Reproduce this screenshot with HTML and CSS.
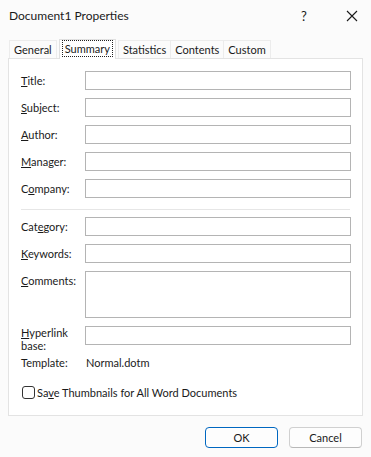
FILE: index.html
```html
<!DOCTYPE html>
<html lang="en">
<head>
  <meta charset="UTF-8" />
  <title>Document1 Properties</title>
  <link rel="stylesheet" href="styles.css">
</head>
<body>
  <div class="dialog">
    <div class="titlebar">
      <span class="title">Document1 Properties</span>
      <span class="help">?</span>
      <svg class="close" width="12" height="12" viewBox="0 0 12 12">
        <path d="M1 1 L11 11 M11 1 L1 11" stroke="#1a1a1a" stroke-width="1.1" fill="none"/>
      </svg>
    </div>

    <div class="tabs">
      <div class="tab">General</div>
      <div class="tab active"><span class="focus">Summary</span></div>
      <div class="tab">Statistics</div>
      <div class="tab">Contents</div>
      <div class="tab">Custom</div>
    </div>

    <div class="panel">
      <div class="fields">
        <label><u>T</u>itle:</label><div class="input"></div>
        <label><u>S</u>ubject:</label><div class="input"></div>
        <label><u>A</u>uthor:</label><div class="input"></div>
        <label><u>M</u>anager:</label><div class="input"></div>
        <label>C<u>o</u>mpany:</label><div class="input"></div>
      </div>

      <div class="separator"></div>

      <div class="fields">
        <label>Cat<u>e</u>gory:</label><div class="input"></div>
        <label><u>K</u>eywords:</label><div class="input"></div>
        <label><u>C</u>omments:</label><div class="input tall"></div>
        <label class="two-line"><u>H</u>yperlink<br>base:</label><div class="input"></div>
        <label>Template:</label><div class="value">Normal.dotm</div>
      </div>

      <div class="check-row">
        <span class="checkbox"></span>
        <span>Sa<u>v</u>e Thumbnails for All Word Documents</span>
      </div>
    </div>

    <div class="actions">
      <button class="btn default">OK</button>
      <button class="btn">Cancel</button>
    </div>
  </div>
</body>
</html>
```

FILE: styles.css
```css
body {
  margin: 0;
  background: #fbfbfb;
  font-family: Lato, "Noto Sans", sans-serif;
  font-size: 11px;
  color: #1a1a1a;
}

.dialog {
  width: 371px;
  height: 457px;
  display: flex;
  flex-direction: column;
}

.titlebar {
  height: 31px;
  display: flex;
  align-items: center;
  padding-left: 9px;
}

.title {
  flex: 1;
  font-size: 12px;
}

.help {
  width: 12px;
  margin-right: 33px;
  font-size: 13px;
}

.close {
  margin-right: 13px;
}

.tabs {
  display: flex;
  align-items: flex-end;
  margin: 8px 0 0 9px;
  height: 19px;
}

.tab {
  height: 17px;
  line-height: 17px;
  padding: 0 4px;
  border: 1px solid #ececec;
  border-bottom: none;
  background: #fbfbfb;
}

.tab + .tab {
  border-left: none;
}

.tab.active {
  height: 19px;
  line-height: 17px;
  margin: 0 2px -1px 2px;
  padding: 0 2px;
  background: #fff;
  border: 1px solid #e0e0e0;
  border-bottom: none;
  position: relative;
  z-index: 1;
}

.tab.active + .tab {
  border-left: 1px solid #ececec;
}

.focus {
  display: inline-block;
  padding: 0 2px;
  line-height: 15px;
  border: 1px dotted #222;
}

.panel {
  margin: 0 8px;
  height: 344px;
  padding: 12px 12px 0 12px;
  background: #fff;
  border: 1px solid #e3e3e3;
}

.fields {
  display: grid;
  grid-template-columns: 64px 266px;
  row-gap: 8px;
}

.fields label {
  height: 19px;
  line-height: 19px;
}

.fields label.two-line {
  line-height: 13px;
  padding-top: 0;
}

.input {
  height: 17px;
  border: 1px solid #b4b4b4;
  background: #fff;
}

.input.tall {
  height: 45px;
}

.value {
  line-height: 19px;
  margin-left: 1px;
}

.separator {
  border-top: 1px solid #e6e6e6;
  margin: 11px 0 7px 0;
}

.check-row {
  display: flex;
  align-items: center;
  margin-top: 14px;
  margin-left: 1px;
}

.checkbox {
  width: 11px;
  height: 11px;
  border: 1px solid #333;
  border-radius: 3px;
  margin-right: 2px;
}

.actions {
  display: flex;
  justify-content: flex-end;
  gap: 11px;
  margin: 11px 9px 0 0;
}

.btn {
  width: 73px;
  height: 21px;
  font-family: Lato, "Noto Sans", sans-serif;
  font-size: 11px;
  color: #1a1a1a;
  background: #fdfdfd;
  border: 1px solid #d0d0d0;
  border-bottom-color: #b8b8b8;
  border-radius: 4px;
  padding: 0;
}

.btn.default {
  border: 1px solid #0067c0;
  box-shadow: inset 0 0 0 1px #fff;
}
```
